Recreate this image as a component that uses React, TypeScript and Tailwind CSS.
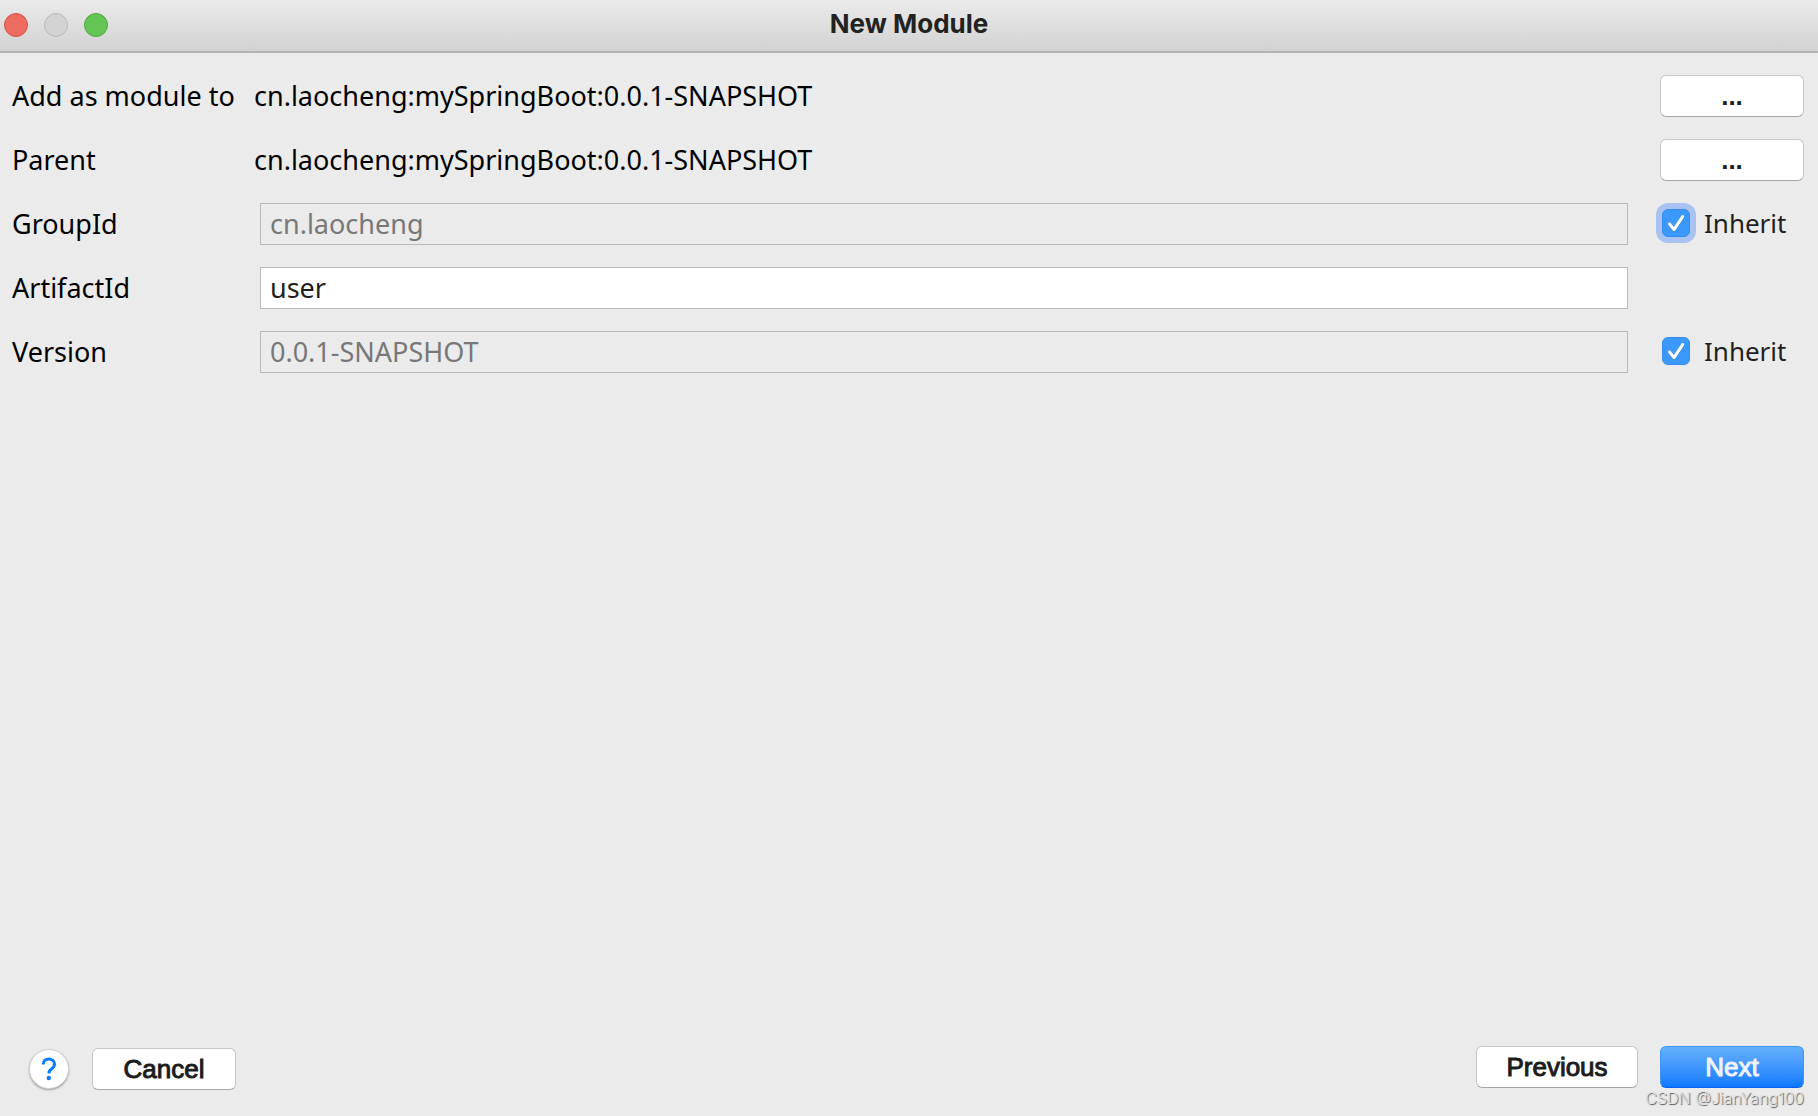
import React, { useState } from "react";

const fieldClass =
  "h-[42px] w-full min-w-0 border border-[#b9b9b9] px-[9px] pb-0.5 text-[27px] text-[#1f1f1f] outline-none disabled:bg-[#ebebeb] disabled:text-[#787878]";

const plainButton =
  "flex h-[42px] items-center justify-center rounded-md border border-[#c6c6c6] border-b-[#a6a6a6] bg-white text-[26px] text-[#1c1c1c]";

function Label({ htmlFor, children }: { htmlFor?: string; children: React.ReactNode }) {
  return htmlFor ? (
    <label htmlFor={htmlFor} className="whitespace-nowrap pb-px">
      {children}
    </label>
  ) : (
    <span className="whitespace-nowrap pb-px">{children}</span>
  );
}

function CoordinateRow({ label, value }: { label: string; value: string }) {
  return (
    <>
      <Label>{label}</Label>
      <span className="truncate pb-px">{value}</span>
      <button
        type="button"
        aria-label={`Choose: ${label}`}
        className={`${plainButton} font-['Liberation_Sans',sans-serif] font-bold`}
      >
        ...
      </button>
    </>
  );
}

function Inherit({
  id,
  checked,
  onChange,
  highlighted,
}: {
  id: string;
  checked: boolean;
  onChange: (value: boolean) => void;
  highlighted?: boolean;
}) {
  return (
    <label htmlFor={id} className="flex items-center gap-3.5 pb-0.5 pl-0.5 text-[26px] text-[#1f1f1f]">
      <span className="relative flex size-7 shrink-0">
        <input
          id={id}
          type="checkbox"
          checked={checked}
          onChange={(e) => onChange(e.target.checked)}
          className={`size-7 appearance-none rounded-md border border-[#b9b9b9] bg-white checked:border-[#368cf0] checked:bg-[#3b98fc] ${
            highlighted ? "ring-6 ring-[#a8c2f2]" : ""
          }`}
        />
        {checked && (
          <svg
            viewBox="0 0 28 28"
            className="pointer-events-none absolute inset-0 size-7"
            fill="none"
            strokeLinecap="round"
            strokeLinejoin="round"
            strokeWidth="3"
          >
            <path d="M7.5 15.8 12 21.4 20.7 8.6" stroke="#2f7fd8" />
            <path d="M7.5 15 12 20.6 20.7 7.6" stroke="#fff" />
          </svg>
        )}
      </span>
      Inherit
    </label>
  );
}

export default function App() {
  const [artifactId, setArtifactId] = useState("user");
  const [inheritGroup, setInheritGroup] = useState(true);
  const [inheritVersion, setInheritVersion] = useState(true);

  return (
    <div className="flex min-h-screen flex-col bg-[#ebebeb] font-['Noto_Sans',sans-serif] text-[27px] leading-9 text-black">
      <header className="grid h-[53px] grid-cols-[1fr_auto_1fr] items-center border-b-2 border-[#b4b4b4] bg-linear-to-b from-[#ebebeb] to-[#d2d2d2] px-1 pb-0.5">
        <div className="flex gap-4">
          <button type="button" aria-label="Close" className="size-6 rounded-full border border-[#d5554a] bg-[#ed6b60]" />
          <button type="button" aria-label="Minimize" className="size-6 rounded-full border border-[#b8b8b8] bg-[#d3d3d3]" />
          <button type="button" aria-label="Zoom" className="size-6 rounded-full border border-[#51a73f] bg-[#62c655]" />
        </div>
        <h1 className="pb-0.5 font-['Inter',sans-serif] text-[26px] font-bold text-[#222]">New Module</h1>
      </header>

      <main className="grid grid-cols-[242px_1fr_144px] items-center gap-y-[22px] py-[22px] pr-3.5 pl-3">
        <CoordinateRow label="Add as module to" value="cn.laocheng:mySpringBoot:0.0.1-SNAPSHOT" />
        <CoordinateRow label="Parent" value="cn.laocheng:mySpringBoot:0.0.1-SNAPSHOT" />

        <Label htmlFor="group-id">GroupId</Label>
        <div className="pr-8 pl-1.5">
          <input id="group-id" disabled={inheritGroup} defaultValue="cn.laocheng" className={fieldClass} />
        </div>
        <Inherit id="inherit-group" checked={inheritGroup} onChange={setInheritGroup} highlighted />

        <Label htmlFor="artifact-id">ArtifactId</Label>
        <div className="pr-8 pl-1.5">
          <input
            id="artifact-id"
            value={artifactId}
            onChange={(e) => setArtifactId(e.target.value)}
            className={`${fieldClass} bg-white`}
          />
        </div>
        <span />

        <Label htmlFor="version">Version</Label>
        <div className="pr-8 pl-1.5">
          <input id="version" disabled={inheritVersion} defaultValue="0.0.1-SNAPSHOT" className={fieldClass} />
        </div>
        <Inherit id="inherit-version" checked={inheritVersion} onChange={setInheritVersion} />
      </main>

      <footer className="mt-auto pr-3.5 pl-[29px] font-['Liberation_Sans',sans-serif]">
        <div className="flex items-start justify-between">
          <div className="flex items-center gap-[23px] pt-0.5">
            <button
              type="button"
              aria-label="Help"
              className="flex size-10 items-center justify-center rounded-full border border-[#d0d0d0] bg-white shadow-[0_1px_2px_#00000055]"
            >
              <svg viewBox="0 0 16 24" className="h-6 w-4" fill="none">
                <path
                  d="M2.2 7.4C2.2 4 4.6 2 7.8 2c3.200 0 5.700 2 5.700 5 0 2.400-1.300 3.700-3 4.900-1.900 1.300-2.600 2.100-2.600 4.500"
                  stroke="#0a7bff"
                  strokeWidth="3"
                />
                <circle cx="7.800" cy="21" r="2.200" fill="#0a7bff" />
              </svg>
            </button>
            <button type="button" className={`${plainButton} w-36 [-webkit-text-stroke:1px_#1c1c1c]`}>
              Cancel
            </button>
          </div>
          <div className="flex gap-[22px]">
            <button type="button" className={`${plainButton} w-[162px] [-webkit-text-stroke:1px_#1c1c1c]`}>
              Previous
            </button>
            <button
              type="button"
              className="flex h-[42px] w-36 items-center justify-center rounded-md border border-[#3d94f5] border-b-[#0a60f0] bg-linear-to-b from-[#64b0fb] to-[#0a7aff] text-[26px] text-[#f0f3f8] [-webkit-text-stroke:1px_#f0f3f8]"
            >
              Next
            </button>
          </div>
        </div>
        <p className="pb-2.5 text-right font-['Inter',sans-serif] text-[16px] leading-4 font-light text-[#e4e4e4] [text-shadow:1px_1px_1px_#555]">
          CSDN @JianYang100
        </p>
      </footer>
    </div>
  );
}
